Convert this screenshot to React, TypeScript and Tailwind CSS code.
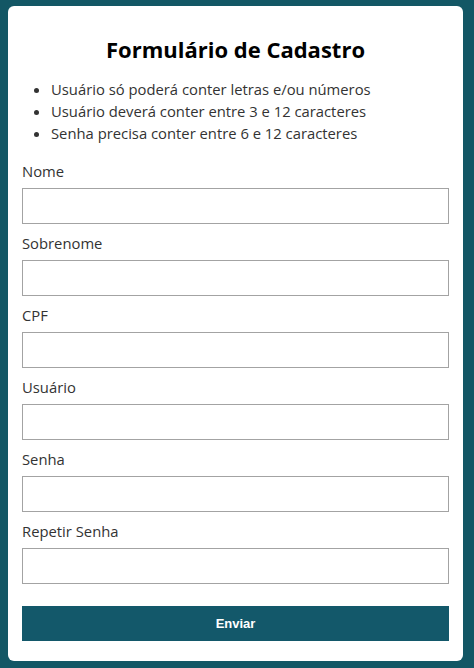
const FIELDS = ["Nome", "Sobrenome", "CPF", "Usuário", "Senha", "Repetir Senha"];

const RULES = [
  "Usuário só poderá conter letras e/ou números",
  "Usuário deverá conter entre 3 e 12 caracteres",
  "Senha precisa conter entre 6 e 12 caracteres",
];

export default function App() {
  return (
    <div className="min-h-screen bg-[#135765] px-2 pt-[6px] font-['Open_Sans',sans-serif]">
      <div className="w-[455px] rounded-md bg-white px-[14px] pt-[28px] pb-[20px]">
        <h1 className="text-center text-[22px] font-bold leading-[30px] text-black">
          Formulário de Cadastro
        </h1>

        <ul className="mt-[14px] list-disc pl-[29px] text-[14.8px] leading-[22px] text-[#333]">
          {RULES.map((r) => (
            <li key={r}>{r}</li>
          ))}
        </ul>

        <form className="mt-[16px] flex flex-col" onSubmit={(e) => e.preventDefault()}>
          {FIELDS.map((f, i) => (
            <div key={f} className={i > 0 ? "mt-[8px]" : ""}>
              <label className="block text-[14.8px] leading-[22px] text-[#333]">{f}</label>
              <input
                type={f.includes("Senha") ? "password" : "text"}
                className="mt-[6px] block h-[36px] w-full border border-[#a3a3a3] bg-white px-2 outline-none"
              />
            </div>
          ))}

          <button
            type="submit"
            className="mt-[22px] h-[35px] w-full bg-[#13586a] font-['Liberation_Sans',Arial,sans-serif] text-[13px] font-bold text-white"
          >
            Enviar
          </button>
        </form>
      </div>
    </div>
  );
}
